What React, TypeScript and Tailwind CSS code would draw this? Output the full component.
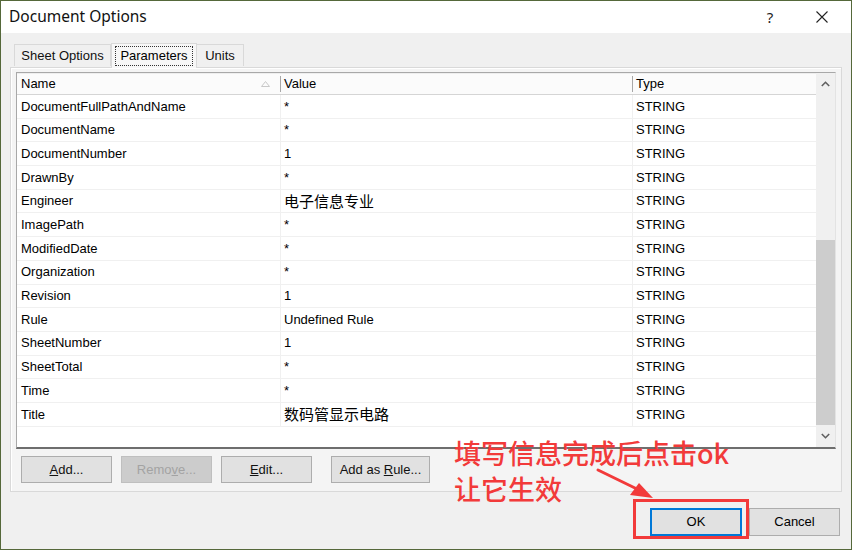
import React from "react";

const rows: [string, string][] = [
  ["DocumentFullPathAndName", "*"],
  ["DocumentName", "*"],
  ["DocumentNumber", "1"],
  ["DrawnBy", "*"],
  ["Engineer", "电子信息专业"],
  ["ImagePath", "*"],
  ["ModifiedDate", "*"],
  ["Organization", "*"],
  ["Revision", "1"],
  ["Rule", "Undefined Rule"],
  ["SheetNumber", "1"],
  ["SheetTotal", "*"],
  ["Time", "*"],
  ["Title", "数码管显示电路"],
];

const isCjk = (s: string) => /[\u4e00-\u9fff]/.test(s);

function Btn({ children, disabled, w, className = "" }: { children: React.ReactNode; disabled?: boolean; w: string; className?: string }) {
  return (
    <div
      className={`${w} h-[27px] flex items-center justify-center border text-[13px] ${
        disabled ? "bg-[#cccccc] border-[#bfbfbf] text-[#a3a3a3]" : "bg-[#e1e1e1] border-[#adadad] text-[#111]"
      } ${className}`}
    >
      {children}
    </div>
  );
}

export default function App() {
  return (
    <div
      className="relative w-[852px] h-[550px] overflow-hidden border border-[#55683a] bg-[#f0f0f0] flex flex-col text-[#000]"
      style={{ fontFamily: '"Liberation Sans", "Noto Sans CJK SC", sans-serif' }}
    >
      {/* Title bar */}
      <div className="h-[32px] bg-white flex items-center shrink-0">
        <div className="pl-[8px] text-[15.5px] text-[#111]" style={{ fontFamily: '"Noto Sans", "Liberation Sans", sans-serif' }}>
          Document Options
        </div>
        <div className="flex-1" />
        <div className="w-[46px] flex justify-center text-[15px] text-[#222]" style={{ fontFamily: '"Noto Sans", sans-serif' }}>?</div>
        <div className="w-[58px] flex justify-center">
          <svg width="12" height="12" viewBox="0 0 12 12">
            <path d="M0.5 0.5 L11.5 11.5 M11.5 0.5 L0.5 11.5" stroke="#222" strokeWidth="1.1" />
          </svg>
        </div>
      </div>

      {/* Body */}
      <div className="flex-1 flex flex-col px-[9px] pt-[9px]">
        {/* Tabs */}
        <div className="flex items-end pl-[4px] h-[25px] text-[13px] relative z-10">
          <div className="w-[97px] h-[22px] mb-[1px] border border-b-0 border-[#d9d9d9] bg-[#f0f0f0] flex items-center justify-center text-[#111]">
            Sheet Options
          </div>
          <div className="w-[86px] h-[25px] border border-b-0 border-[#d9d9d9] bg-[#f7f7f7] flex items-center justify-center -mb-[1px] pb-[1px]">
            <div className="border border-dotted border-[#333] px-[4px] h-[20px] flex items-center">Parameters</div>
          </div>
          <div className="w-[47px] h-[22px] mb-[1px] border border-b-0 border-l-0 border-[#d9d9d9] bg-[#f0f0f0] flex items-center justify-center text-[#111]">
            Units
          </div>
        </div>

        {/* Panel */}
        <div className="h-[425px] border border-[#d9d9d9] bg-[#f4f4f4] shadow-[inset_1px_1px_0_#ffffff] flex flex-col pt-[4px] px-[5px]">
          {/* List view */}
          <div className="h-[377px] flex bg-white border-t border-l border-[#a8a8a8] border-r border-r-[#e3e3e3] border-b-2 border-b-[#6e6e6e]">
            <div className="flex-1 flex flex-col">
              {/* Header */}
              <div className="h-[22px] flex text-[13px] bg-[#fbfbfb] border-b border-[#d5d5d5] border-t border-t-[#eeeeee]">
                <div className="w-[263px] flex items-center pl-[4px] relative">
                  Name
                  <svg className="absolute right-[10px] top-[7px]" width="9" height="6" viewBox="0 0 9 6">
                    <path d="M4.5 0.5 L8.5 5.5 L0.5 5.5 Z" fill="none" stroke="#c8c8c8" strokeWidth="1" />
                  </svg>
                </div>
                <div className="w-px my-[2px] bg-[#a8a8a8]" />
                <div className="w-[351px] flex items-center pl-[3px]">Value</div>
                <div className="w-px my-[2px] bg-[#a8a8a8]" />
                <div className="flex-1 flex items-center pl-[3px]">Type</div>
              </div>
              {/* Rows */}
              <div className="flex-1 flex flex-col">
                {rows.map(([n, v]) => (
                  <div key={n} className="h-[23.7px] flex text-[13px] border-b border-[#f0f0f0]">
                    <div className="w-[264px] flex items-center pl-[4px] border-r border-[#f0f0f0]">{n}</div>
                    <div className="w-[352px] flex items-center pl-[3px] border-r border-[#f0f0f0]">
                      {isCjk(v) ? <span className="text-[15px]" style={{ fontFamily: '"Noto Sans CJK SC", sans-serif' }}>{v}</span> : v}
                    </div>
                    <div className="flex-1 flex items-center pl-[3px]">STRING</div>
                  </div>
                ))}
              </div>
            </div>
            {/* Scrollbar */}
            <div className="w-[19px] bg-[#f0f0f0] flex flex-col">
              <div className="h-[22px] flex items-center justify-center">
                <svg width="9" height="6" viewBox="0 0 9 6">
                  <path d="M0.8 5 L4.5 1.3 L8.2 5" fill="none" stroke="#606060" strokeWidth="1.6" />
                </svg>
              </div>
              <div className="flex-1 flex flex-col">
                <div className="h-[145px]" />
                <div className="flex-1 bg-[#cdcdcd]" />
              </div>
              <div className="h-[22px] flex items-center justify-center">
                <svg width="9" height="6" viewBox="0 0 9 6">
                  <path d="M0.8 1 L4.5 4.7 L8.2 1" fill="none" stroke="#606060" strokeWidth="1.6" />
                </svg>
              </div>
            </div>
          </div>

          {/* Buttons */}
          <div className="flex pt-[7px] pl-[5px]">
            <Btn w="w-[91px]"><span><span className="underline">A</span>dd...</span></Btn>
            <Btn w="w-[91px]" disabled className="ml-[9px]"><span>Remo<span className="underline">v</span>e...</span></Btn>
            <Btn w="w-[91px]" className="ml-[9px]"><span><span className="underline">E</span>dit...</span></Btn>
            <Btn w="w-[99px]" className="ml-[19px]"><span>Add as <span className="underline">R</span>ule...</span></Btn>
          </div>
        </div>

        {/* OK / Cancel */}
        <div className="flex justify-end pt-[16px] pr-[2px]">
          <div className="w-[92px] h-[28px] border-2 border-[#0078d7] bg-[#e1e1e1] flex items-center justify-center text-[13px]">OK</div>
          <div className="w-[91px] h-[28px] ml-[7px] border border-[#adadad] bg-[#e1e1e1] flex items-center justify-center text-[13px]">Cancel</div>
        </div>
      </div>

      {/* Annotation overlay */}
      <div
        className="absolute left-[453px] top-[434px] text-[27px] leading-[36px] font-medium text-[#f23a3a]"
        style={{ fontFamily: '"Noto Sans CJK SC", sans-serif' }}
      >
        <div>填写信息完成后点击ok</div>
        <div>让它生效</div>
      </div>
      <div className="absolute left-[632px] top-[498px] w-[116px] h-[40px] border-[3px] border-[#f23a3a]" />
      <svg className="absolute left-0 top-0 pointer-events-none" width="852" height="550">
        <path d="M597 469 L636 488" stroke="#f23a3a" strokeWidth="3" strokeLinecap="round" />
        <path d="M652 497 L629 494 L638 482 Z" fill="#f23a3a" />
      </svg>
    </div>
  );
}
